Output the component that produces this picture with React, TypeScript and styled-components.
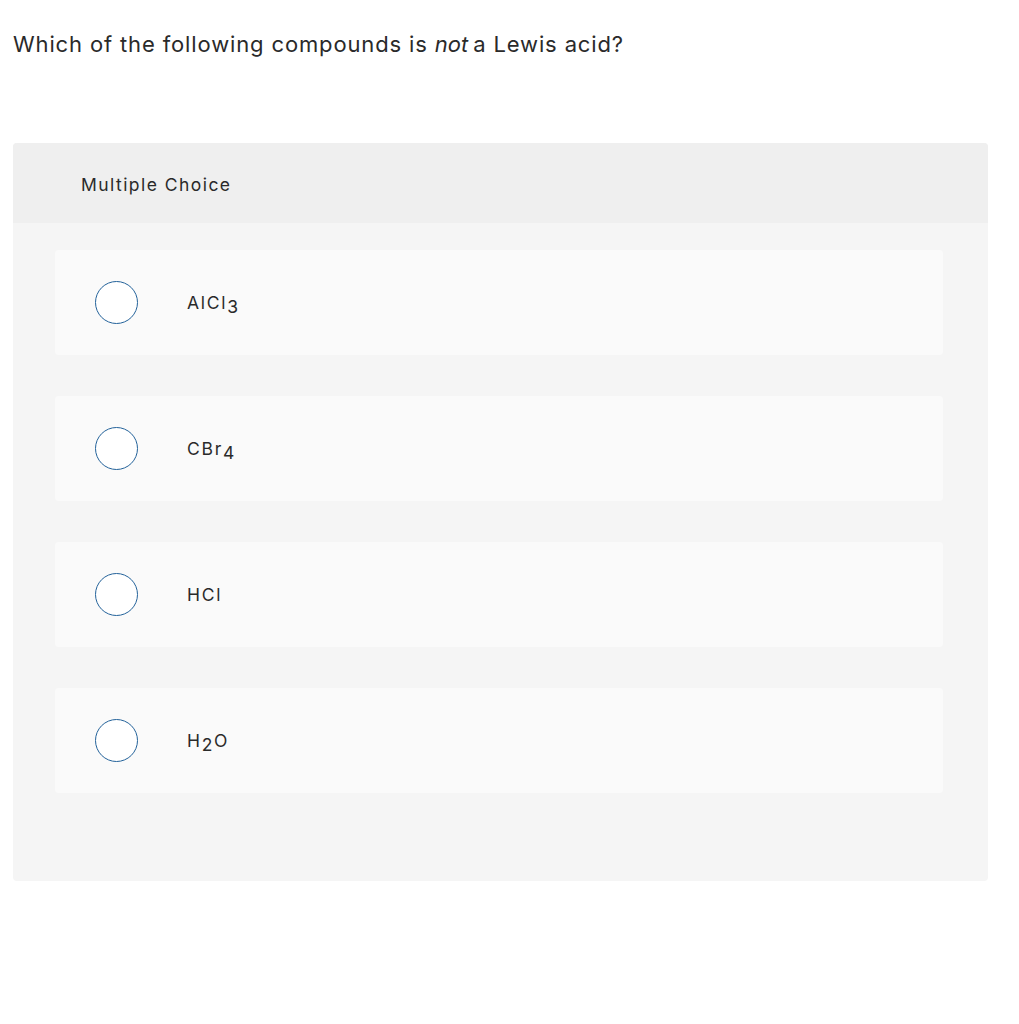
import { FC } from "react";
import styled, { createGlobalStyle } from "styled-components";

type Option = {
  id: number;
  parts: { text: string; sub?: boolean }[];
};

const options: Option[] = [
  { id: 1, parts: [{ text: "AlCl" }, { text: "3", sub: true }] },
  { id: 2, parts: [{ text: "CBr" }, { text: "4", sub: true }] },
  { id: 3, parts: [{ text: "HCl" }] },
  { id: 4, parts: [{ text: "H" }, { text: "2", sub: true }, { text: "O" }] },
];

const App: FC = () => {
  return (
    <>
      <GlobalStyle />
      <StPage>
        <StQuestion>
          Which of the following compounds is <em>not</em> a Lewis acid?
        </StQuestion>
        <StPanel>
          <StHeader>Multiple Choice</StHeader>
          <StList>
            {options.map((o) => (
              <StOption key={o.id}>
                <StRadio />
                <StLabel>
                  {o.parts.map((p, i) =>
                    p.sub ? <StSub key={i}>{p.text}</StSub> : <span key={i}>{p.text}</span>
                  )}
                </StLabel>
              </StOption>
            ))}
          </StList>
        </StPanel>
      </StPage>
    </>
  );
};

export default App;

const GlobalStyle = createGlobalStyle`
  body {
    margin: 0;
    background: #ffffff;
    font-family: "Inter", "Open Sans", sans-serif;
    color: #2a2a2a;
  }
`;

const StPage = styled.div`
  padding: 28px 31px 0 13px;
`;
const StQuestion = styled.p`
  margin: 0;
  font-size: 22px;
  line-height: 32px;
  letter-spacing: 0.86px;
  em {
    font-style: italic;
    letter-spacing: 0;
    margin-right: -2px;
  }
`;
const StPanel = styled.section`
  margin-top: 83px;
  background: #f5f5f5;
  border-radius: 4px;
  overflow: hidden;
  padding-bottom: 88px;
`;
const StHeader = styled.h3`
  margin: 0;
  height: 80px;
  display: flex;
  align-items: center;
  padding-left: 68px;
  background: #efefef;
  font-size: 17.5px;
  font-weight: 400;
  letter-spacing: 1.45px;
  padding-top: 2px;
  box-sizing: border-box;
`;
const StList = styled.ul`
  list-style: none;
  margin: 27px 0 0;
  padding: 0 45px 0 42px;
  display: flex;
  flex-direction: column;
  gap: 41px;
`;
const StOption = styled.li`
  height: 105px;
  background: #fafafa;
  border-radius: 4px;
  display: flex;
  align-items: center;
  padding-left: 40px;
`;
const StRadio = styled.span`
  width: 41px;
  height: 41px;
  border: 1.6px solid #23629a;
  border-radius: 50%;
  background: #ffffff;
  flex: none;
`;
const StLabel = styled.span`
  margin-left: 49px;
  font-size: 17.5px;
  letter-spacing: 1.7px;
`;
const StSub = styled.span`
  position: relative;
  top: 4px;
`;
